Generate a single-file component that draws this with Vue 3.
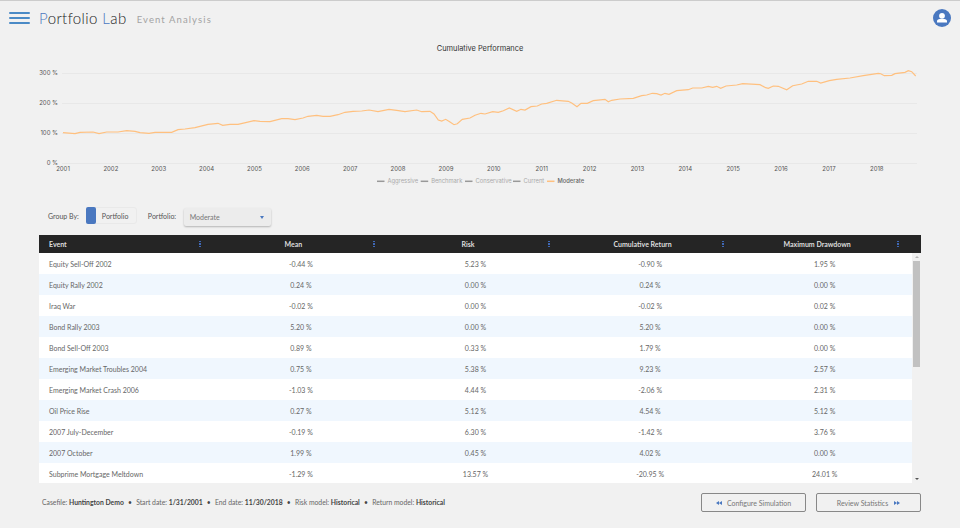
<template>
  <div class="page">
    <header class="topbar">
      <div class="burger"><span></span><span></span><span></span></div>
      <div class="brand"><b>P</b>ortfolio <b>L</b>ab</div>
      <div class="subtitle">Event Analysis</div>
      <div class="spacer"></div>
      <svg class="avatar" viewBox="0 0 18 18" width="18" height="18">
        <circle cx="9" cy="9" r="9" fill="#4a78c0" />
        <circle cx="9" cy="6.8" r="2.9" fill="#fff" />
        <path d="M4 13.6v-1.2c0-1.4 1.2-2.3 2.6-2.3h4.8c1.4 0 2.6.9 2.6 2.3v1.2z" fill="#fff" />
      </svg>
    </header>

    <svg class="chart" viewBox="0 35 960 165" width="960" height="165">
      <text x="480" y="51" text-anchor="middle" class="chart-title">Cumulative Performance</text>
      <g v-for="tick in yTicks" :key="tick.label">
        <line x1="62" x2="917" :y1="tick.y" :y2="tick.y" class="grid" />
        <text x="58" :y="tick.y + 1.6" text-anchor="end" class="axis">{{ tick.label }}</text>
      </g>
      <text v-for="(year, i) in years" :key="year" :x="63 + i * 47.87" y="170.5" text-anchor="middle" class="axis">{{ year }}</text>
      <polyline :points="linePoints" class="series" />
      <g v-for="item in legend" :key="item.name">
        <line :x1="item.x" :x2="item.x + 7.5" y1="181.3" y2="181.3" :stroke="item.color" stroke-width="1.5" />
        <text :x="item.x + 10.5" y="183" :class="item.active ? 'legend on' : 'legend'">{{ item.name }}</text>
      </g>
    </svg>

    <div class="toolbar">
      <span class="tool-label">Group By:</span>
      <div class="switch">
        <div class="switch-knob"></div>
        <span>Portfolio</span>
      </div>
      <span class="tool-label second">Portfolio:</span>
      <div class="select">
        <span>Moderate</span>
        <i class="caret"></i>
      </div>
    </div>

    <div class="table">
      <div class="thead">
        <div v-for="(col, i) in columns" :key="col" class="th" :class="{ first: i === 0 }">
          <span class="th-label">{{ col }}</span>
          <span class="dots"><i></i><i></i><i></i></span>
        </div>
        <div></div>
      </div>
      <div class="tbody">
        <div class="rows">
          <div v-for="row in rows" :key="row[0]" class="tr">
            <div v-for="(cell, i) in row" :key="i" class="td" :class="{ first: i === 0 }">{{ cell }}</div>
          </div>
        </div>
        <div class="scrollbar">
          <i class="arrow up"></i>
          <div class="thumb"></div>
          <div class="spacer"></div>
          <i class="arrow down"></i>
        </div>
      </div>
    </div>

    <footer class="footer">
      <div class="meta">
        Casefile: <b>Huntington Demo</b><em>•</em>Start date: <b>1/31/2001</b><em>•</em>End date: <b>11/30/2018</b><em>•</em>Risk model: <b>Historical</b><em>•</em>Return model: <b>Historical</b>
      </div>
      <button class="btn">
        <svg class="chev" viewBox="0 0 6 4" width="6" height="4"><path d="M3 0v4L0 2zM6 0v4L3 2z" /></svg>
        <span>Configure Simulation</span>
      </button>
      <button class="btn">
        <span>Review Statistics</span>
        <svg class="chev after" viewBox="0 0 6 4" width="6" height="4"><path d="M0 0v4l3-2zM3 0v4l3-2z" /></svg>
      </button>
    </footer>
  </div>
</template>

<script setup>
const yTicks = [
  { label: '300 %', y: 73.5 },
  { label: '200 %', y: 103.5 },
  { label: '100 %', y: 133.5 },
  { label: '0 %', y: 163.5 }
]

const years = []
for (let y = 2001; y <= 2018; y++) years.push(y)

const legend = [
  { name: 'Aggressive', x: 377, color: '#999' },
  { name: 'Benchmark', x: 420.7, color: '#999' },
  { name: 'Conservative', x: 465, color: '#999' },
  { name: 'Current', x: 513, color: '#999' },
  { name: 'Moderate', x: 547, color: '#ffc07f', active: true }
]

// traced from the reference, px coordinates
const line = [
  [63, 132.7], [75, 133.7], [80, 132.3], [93, 132], [99, 133.7], [106.7, 132], [118, 132], [126.7, 130.7],
  [135, 131.3], [140, 132.7], [149, 133.3], [155, 132.3], [171.7, 132.3], [178, 129.7], [185, 129], [195, 127.7],
  [208, 124.3], [218, 123.3], [222.7, 125.3], [230, 124.3], [238, 124.3], [246.7, 122.3], [254, 120.7], [260, 121.3],
  [270, 121.7], [281.7, 118.7], [288, 118.7], [295, 119.7], [303, 118], [308, 116.3], [316.7, 115.3], [323, 116.3],
  [330, 116.3], [338, 114.7], [345, 112.3], [353, 111.3], [361.7, 111], [369, 110], [378, 111.7], [389, 109.3],
  [396.7, 110.3], [405, 111.7], [416.7, 110], [421.7, 111.7], [430, 111.3], [434, 114], [438.3, 120], [441.7, 121],
  [445.7, 119.3], [450, 122], [454, 124.7], [457.3, 123.7], [462.3, 119.3], [470, 118], [475, 115.3], [481, 113.3],
  [485, 114], [492.7, 111.7], [498.3, 112.3], [503.3, 110.7], [509.3, 108], [516.7, 111.3], [521, 109.3], [525, 110],
  [531, 106.7], [537.3, 106], [541.7, 104], [546.7, 103.3], [556.7, 100.3], [568.3, 101.3], [571.7, 103], [577, 106.7],
  [581, 103.3], [587.3, 103.3], [593.3, 100.7], [605, 99.3], [608.3, 101.7], [611.7, 100.3], [620, 99], [633.3, 98.3],
  [641.7, 95.7], [646.7, 95], [652.3, 93.3], [656.7, 93.7], [661, 95], [665, 93.3], [669, 94.3], [676.7, 90.7],
  [688.3, 89.7], [692.7, 88], [701.7, 88], [708.3, 86.3], [712.7, 87.3], [716.7, 86.3], [720.7, 88.3], [726, 86],
  [736.7, 85], [742.7, 83.7], [760, 84.7], [765.7, 87.7], [768.3, 88.3], [773.3, 86], [778.3, 86.3], [786.7, 89.7],
  [792.7, 85.7], [801.7, 84], [808.3, 81.3], [816.7, 81.3], [820.7, 83], [829.3, 80.7], [836.7, 79.3], [850, 78],
  [863.3, 75.7], [878.3, 73.3], [880.7, 73.7], [884.3, 75.7], [891.7, 75.3], [895, 73.7], [905, 72.3], [908.3, 70.7],
  [911.7, 71.7], [915.7, 76]
]
const linePoints = line.map((p) => p.join(',')).join(' ')

const columns = ['Event', 'Mean', 'Risk', 'Cumulative Return', 'Maximum Drawdown']

const rows = [
  ['Equity Sell-Off 2002', '-0.44 %', '5.23 %', '-0.90 %', '1.95 %'],
  ['Equity Rally 2002', '0.24 %', '0.00 %', '0.24 %', '0.00 %'],
  ['Iraq War', '-0.02 %', '0.00 %', '-0.02 %', '0.02 %'],
  ['Bond Rally 2003', '5.20 %', '0.00 %', '5.20 %', '0.00 %'],
  ['Bond Sell-Off 2003', '0.89 %', '0.33 %', '1.79 %', '0.00 %'],
  ['Emerging Market Troubles 2004', '0.75 %', '5.38 %', '9.23 %', '2.57 %'],
  ['Emerging Market Crash 2006', '-1.03 %', '4.44 %', '-2.06 %', '2.31 %'],
  ['Oil Price Rise', '0.27 %', '5.12 %', '4.54 %', '5.12 %'],
  ['2007 July-December', '-0.19 %', '6.30 %', '-1.42 %', '3.76 %'],
  ['2007 October', '1.99 %', '0.45 %', '4.02 %', '0.00 %'],
  ['Subprime Mortgage Meltdown', '-1.29 %', '13.57 %', '-20.95 %', '24.01 %']
]
</script>

<style scoped>
.page {
  width: 960px;
  height: 528px;
  background: #f1f1f1;
  font-family: Lato, "Open Sans", sans-serif;
  color: #666;
  overflow: hidden;
}

.topbar {
  display: flex;
  align-items: center;
  height: 34px;
  border-top: 1px solid #ccc;
  padding: 0 9px;
}

.spacer {
  flex: 1;
}

.burger {
  width: 21px;
  display: flex;
  flex-direction: column;
  gap: 3px;
  margin-right: 9px;
}

.burger span {
  height: 2px;
  background: #4a8ac6;
  border-radius: 1px;
}

.brand {
  font-size: 15px;
  font-weight: 300;
  letter-spacing: 0.4px;
  color: #222;
}

.brand b {
  font-weight: 300;
  color: #4a78c0;
}

.subtitle {
  margin: 2px 0 0 10px;
  font-size: 9.5px;
  letter-spacing: 1.1px;
  color: #a3a3a3;
}

.chart {
  display: block;
}

.chart-title {
  font-family: Inter, sans-serif;
  font-size: 7.4px;
  fill: #333;
}

.axis {
  font-family: Inter, sans-serif;
  font-size: 6px;
  fill: #555;
}

.grid {
  stroke: #e8e8e8;
  stroke-width: 1;
}

.series {
  fill: none;
  stroke: #ffc07f;
  stroke-width: 1.2;
}

.legend {
  font-family: Inter, sans-serif;
  font-size: 5.8px;
  fill: #aaa;
}

.legend.on {
  fill: #666;
  font-weight: 500;
}

.toolbar {
  display: flex;
  align-items: center;
  height: 19px;
  margin-top: 7px;
  padding-left: 48px;
  font-size: 7px;
}

.tool-label {
  margin-bottom: 2px;
  color: #555;
}

.second {
  margin-left: 11px;
}

.switch {
  display: flex;
  align-items: center;
  width: 51px;
  height: 17px;
  margin: 0 0 2px 7px;
  border: 1px solid #e9e9e9;
  border-radius: 3px;
  color: #555;
  box-sizing: border-box;
}

.switch-knob {
  width: 10px;
  height: 17px;
  margin-left: -1px;
  margin-right: 6px;
  background: #4a78c0;
  border-radius: 2px;
}

.select {
  display: flex;
  align-items: center;
  justify-content: space-between;
  width: 87px;
  height: 18px;
  margin: 1px 0 0 7.5px;
  padding: 0 6px;
  box-sizing: border-box;
  background: #ececec;
  border-radius: 2px;
  box-shadow: 0 1px 2px rgba(0, 0, 0, 0.25);
  color: #777;
}

.caret {
  width: 0;
  height: 0;
  margin-right: 1px;
  border-left: 2.5px solid transparent;
  border-right: 2.5px solid transparent;
  border-top: 3.5px solid #4a78c0;
}

.table {
  margin: 9px 39px 0;
}

.thead,
.tr {
  display: grid;
  grid-template-columns: repeat(5, 1fr);
}

.thead {
  grid-template-columns: repeat(5, 174.6px) 9px;
  height: 18px;
  background: #252525;
  color: #ddd;
  font-size: 7px;
  font-weight: 700;
}

.th {
  display: flex;
  align-items: center;
}

.th-label {
  flex: 1;
  text-align: center;
}

.th.first .th-label {
  text-align: left;
  padding-left: 10px;
}

.dots {
  display: flex;
  flex-direction: column;
  gap: 1px;
  margin-right: 13px;
}

.dots i {
  width: 2px;
  height: 1.5px;
  background: #3f68b5;
}

.tbody {
  display: flex;
  height: 230px;
  background: #fff;
}

.rows {
  flex: 1;
}

.tr {
  height: 21px;
  align-items: center;
  font-size: 7px;
  color: #666;
}

.tr:nth-child(even) {
  background: #f0f7fe;
}

.td {
  text-align: center;
}

.td.first {
  text-align: left;
  padding-left: 10px;
}

.scrollbar {
  width: 9px;
  display: flex;
  flex-direction: column;
  align-items: center;
  background: #f1f1f1;
}

.arrow {
  width: 0;
  height: 0;
  margin: 3px 0;
  border-left: 2px solid transparent;
  border-right: 2px solid transparent;
}

.arrow.up {
  border-bottom: 2.5px solid #b5b5b5;
}

.arrow.down {
  border-top: 2.5px solid #555;
}

.thumb {
  width: 7px;
  height: 106px;
  background: #c1c1c1;
}

.footer {
  display: flex;
  align-items: center;
  margin-top: 10px;
  padding: 0 39px 0 42px;
  height: 19px;
}

.meta {
  flex: 1;
  margin-bottom: 1px;
  font-size: 6.8px;
  color: #666;
}

.meta b {
  color: #444;
}

.meta em {
  font-style: normal;
  margin: 0 4.2px;
  color: #444;
}

.btn {
  display: flex;
  align-items: center;
  justify-content: center;
  width: 105px;
  height: 19px;
  margin-left: 10px;
  padding: 0;
  background: transparent;
  border: 1px solid #888;
  border-radius: 2px;
  font-family: Lato, sans-serif;
  font-size: 7px;
  color: #777;
}

.chev {
  margin-right: 5px;
  fill: #4a78c0;
}

.chev.after {
  margin: 0 0 0 6px;
}
</style>
